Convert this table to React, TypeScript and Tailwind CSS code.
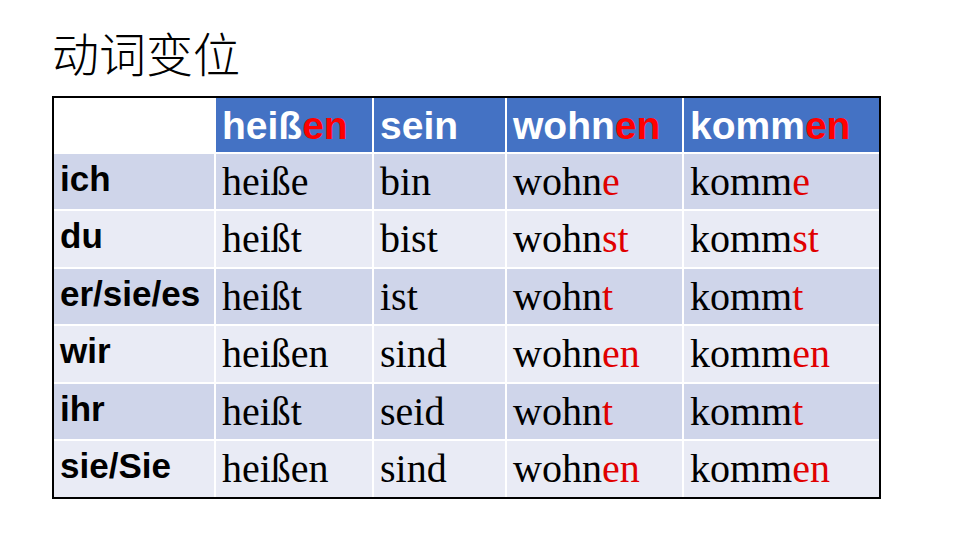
const pronouns = ["ich", "du", "er/sie/es", "wir", "ihr", "sie/Sie"];

// [stem, ending] per verb, per pronoun
const verbs: { head: [string, string]; forms: [string, string][]; colored: boolean }[] = [
  {
    head: ["heiß", "en"],
    colored: false,
    forms: [["heiße", ""], ["heißt", ""], ["heißt", ""], ["heißen", ""], ["heißt", ""], ["heißen", ""]],
  },
  {
    head: ["sein", ""],
    colored: false,
    forms: [["bin", ""], ["bist", ""], ["ist", ""], ["sind", ""], ["seid", ""], ["sind", ""]],
  },
  {
    head: ["wohn", "en"],
    colored: true,
    forms: [["wohn", "e"], ["wohn", "st"], ["wohn", "t"], ["wohn", "en"], ["wohn", "t"], ["wohn", "en"]],
  },
  {
    head: ["komm", "en"],
    colored: true,
    forms: [["komm", "e"], ["komm", "st"], ["komm", "t"], ["komm", "en"], ["komm", "t"], ["komm", "en"]],
  },
];

const serif = "font-['Liberation_Serif','Times_New_Roman',serif]";
const sans = "font-['Liberation_Sans',Arial,sans-serif]";

export default function App() {
  return (
    <div className="w-[960px] h-[540px] bg-white overflow-hidden pl-[52px] pt-[26px]">
      <h1 className="text-[47px] leading-[52px] font-light text-black font-['Noto_Sans_CJK_SC',sans-serif] mb-[18px]">
        动词变位
      </h1>

      <div className="w-[829px] border-2 border-black bg-white">
        <div className="grid grid-cols-[160px_156px_131px_175px_195px] grid-rows-[54px_55px_56px_55px_56px_55px_56px] gap-[2px]">
          {/* header */}
          <div className="bg-white" />
          {verbs.map((v) => (
            <div
              key={v.head[0]}
              className={`bg-[#4472c4] px-[6px] text-[39px] leading-[55px] font-bold text-white ${sans}`}
            >
              {v.head[0]}
              <span className="text-[#ff0000]">{v.head[1]}</span>
            </div>
          ))}

          {pronouns.map((p, i) => {
            const bg = i % 2 === 0 ? "bg-[#cfd5ea]" : "bg-[#e9ebf5]";
            return [
              <div
                key={p}
                className={`${bg} px-[6px] text-[35px] leading-[50px] font-bold text-black ${sans}`}
              >
                {p}
              </div>,
              ...verbs.map((v) => (
                <div
                  key={p + v.head[0]}
                  className={`${bg} px-[6px] text-[40px] leading-[56px] text-black ${serif}`}
                >
                  {v.forms[i][0]}
                  {v.colored && <span className="text-[#e00000]">{v.forms[i][1]}</span>}
                </div>
              )),
            ];
          })}
        </div>
      </div>
    </div>
  );
}
